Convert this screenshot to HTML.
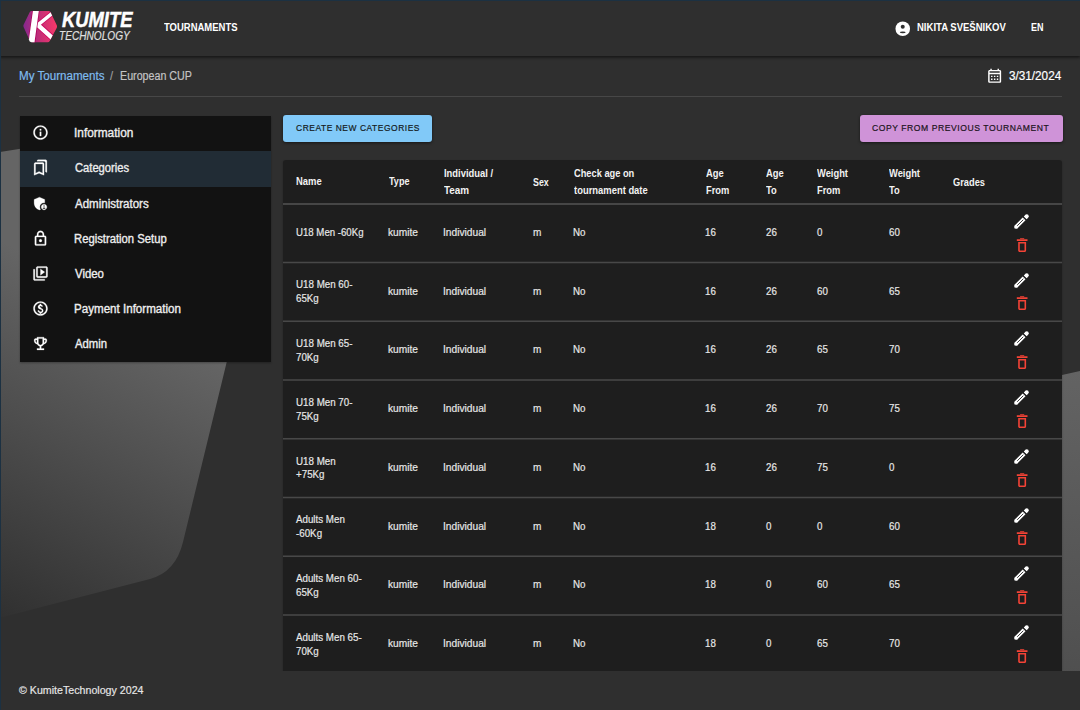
<!DOCTYPE html>
<html><head><meta charset="utf-8"><style>
html,body{margin:0;padding:0;}
body{width:1080px;height:710px;position:relative;overflow:hidden;background:#2f2f2f;font-family:"Liberation Sans",sans-serif;}
.t{position:absolute;line-height:1;white-space:nowrap;transform-origin:0 0;}
.r{-webkit-text-stroke:0.18px currentColor;}
.sb{-webkit-text-stroke:0.35px currentColor;}
.i{position:absolute;display:block;}
.rd{position:absolute;left:283px;width:779px;height:1px;background:#444444;}
</style></head><body>
<svg style="position:absolute;left:0;top:0" width="1080" height="710">
<defs>
<linearGradient id="gl" gradientUnits="userSpaceOnUse" x1="226" y1="362" x2="55" y2="678"><stop offset="0" stop-color="#656565"/><stop offset="1" stop-color="#2c2c2c"/></linearGradient>
<linearGradient id="gr" gradientUnits="userSpaceOnUse" x1="1080" y1="370" x2="1080" y2="680"><stop offset="0" stop-color="#636363"/><stop offset="1" stop-color="#4f4f4f"/></linearGradient>
</defs>
<path fill="url(#gl)" d="M0 152 L200 120.4 Q280 105 268.5 190 L183 542 Q175.6 572.2 150 578.9 L0 617.7 Z"/>
<path fill="url(#gr)" d="M1062 374.9 L1080 371 L1080 680 L1062 680 Z"/>
</svg>
<!-- header -->
<div style="position:absolute;left:0;top:0;width:1080px;height:56px;background:#2f2f2f;box-shadow:0 1px 3px rgba(0,0,0,0.45),0 2px 2px rgba(0,0,0,0.2)"></div>
<div style="position:absolute;left:0;top:0;width:1080px;height:1px;background:#1c3142"></div>
<!-- logo -->
<svg style="position:absolute;left:20px;top:8px" width="40" height="38" viewBox="20 8 40 38">
<defs><linearGradient id="lg" gradientUnits="userSpaceOnUse" x1="23" y1="0" x2="57.5" y2="0"><stop offset="0" stop-color="#85288e"/><stop offset="0.45" stop-color="#c02e78"/><stop offset="1" stop-color="#fb3968"/></linearGradient>
<clipPath id="hc"><path d="M23.6 24.8 Q23.1 25.9 23.6 27 L28.8 38.6 Q30.4 42.3 32.6 42.3 L47.8 42.3 Q49 42.3 49.7 41.1 L56.8 27.8 Q57.4 26.5 56.8 25.2 L50.4 12.1 Q49.7 10.9 48.5 10.9 L31.6 10.9 Q30.4 10.9 29.8 12 Z"/></clipPath></defs>
<path fill="url(#lg)" d="M23.6 24.8 Q23.1 25.9 23.6 27 L28.8 38.6 Q30.4 42.3 32.6 42.3 L47.8 42.3 Q49 42.3 49.7 41.1 L56.8 27.8 Q57.4 26.5 56.8 25.2 L50.4 12.1 Q49.7 10.9 48.5 10.9 L31.6 10.9 Q30.4 10.9 29.8 12 Z"/>
<g clip-path="url(#hc)">
<path d="M37 25.6 L53 12.6" stroke="#c8005a" stroke-width="5"/>
<path d="M37.5 24.6 L53 38.6" stroke="#c8005a" stroke-width="6"/>
<path d="M37 25.6 L53 12.6" stroke="#fff" stroke-width="3.6"/>
<path d="M37.5 24.6 L53 38.6" stroke="#fff" stroke-width="4.6"/>
<path fill="#b0005a" d="M32.2 10 L39.6 10 L35.3 43 L27.9 43 Z"/>
</g>
<path fill="#fff" d="M32.9 10.9 L38.8 10.9 L34.5 42.3 L31.4 42.3 Q29.2 42 28.9 39.6 Z"/>
</svg>
<div style="position:absolute;left:0;top:56px;width:1px;height:654px;background:#1c3142"></div>
<div style="position:absolute;left:0;top:0;width:1px;height:56px;background:#1c3142"></div>
<!-- breadcrumb divider -->
<div style="position:absolute;left:19px;top:96px;width:1043px;height:1px;background:#474747"></div>
<!-- sidebar -->
<div style="position:absolute;left:19.6px;top:115.7px;width:251px;height:246.1px;background:#121212;box-shadow:0 1px 2px rgba(0,0,0,0.3)"></div>
<div style="position:absolute;left:19.6px;top:150.8px;width:251px;height:36px;background:#212c35"></div>
<!-- buttons -->
<div style="position:absolute;left:283px;top:115px;width:149px;height:27px;background:#81c9f8;border-radius:3px;box-shadow:0 1px 3px rgba(0,0,0,0.5)"></div>
<div style="position:absolute;left:860px;top:115.2px;width:202.6px;height:26.8px;background:#cf93d8;border-radius:3px;box-shadow:0 1px 3px rgba(0,0,0,0.5)"></div>
<!-- table -->
<div style="position:absolute;left:283px;top:160px;width:779px;height:511px;background:#1e1e1e;border-radius:3px 3px 0 0;box-shadow:0 1px 2px rgba(0,0,0,0.3)"></div>
<svg style="position:absolute;left:0;top:0" width="1080" height="710"><rect x="283" y="203" width="779" height="2" fill="#464646"/><rect x="283" y="261.70" width="779" height="1.6" fill="#484848"/><rect x="283" y="320.45" width="779" height="1.6" fill="#484848"/><rect x="283" y="379.20" width="779" height="1.6" fill="#484848"/><rect x="283" y="437.95" width="779" height="1.6" fill="#484848"/><rect x="283" y="496.70" width="779" height="1.6" fill="#484848"/><rect x="283" y="555.45" width="779" height="1.6" fill="#484848"/><rect x="283" y="614.20" width="779" height="1.6" fill="#484848"/></svg>
<!-- footer -->
<div style="position:absolute;left:1px;top:671px;width:1079px;height:39px;background:#2f2f2f"></div>
<svg class="i" style="left:31.60px;top:124.30px;width:17px;height:17px;overflow:visible" viewBox="0 0 24 24"><path fill="#fff" fill-rule="evenodd" stroke="#fff" stroke-width="0.35" d="M11 7h2v2h-2zm0 4h2v6h-2zm1-9C6.48 2 2 6.48 2 12s4.48 10 10 10 10-4.48 10-10S17.52 2 12 2zm0 18c-4.41 0-8-3.59-8-8s3.59-8 8-8 8 3.59 8 8-3.59 8-8 8z"/></svg><svg class="i" style="left:31.60px;top:159.40px;width:17px;height:17px;overflow:visible" viewBox="0 0 24 24"><path fill="#fff" fill-rule="evenodd" stroke="#fff" stroke-width="0.35" d="M15 7v12.97l-4.21-1.81-.79-.34-.79.34L5 19.97V7h10m4-6H8.99C7.89 1 7 1.9 7 3h10c1.1 0 2 .9 2 2v13l2 1V3c0-1.1-.9-2-2-2zm-4 4H5c-1.1 0-2 .9-2 2v16l7-3 7 3V7c0-1.1-.9-2-2-2z"/></svg><svg class="i" style="left:31.60px;top:194.50px;width:17px;height:17px;overflow:visible" viewBox="0 0 24 24"><path fill="#fff" fill-rule="evenodd" stroke="#fff" stroke-width="0.35" d="M17 11c.34 0 .67.04 1 .09V6.27L10.5 3 3 6.27v4.91c0 4.54 3.2 8.79 7.5 9.82.55-.13 1.08-.32 1.6-.55-.69-.98-1.1-2.17-1.1-3.45 0-3.31 2.69-6 6-6zm0 2c-2.21 0-4 1.79-4 4s1.79 4 4 4 4-1.79 4-4-1.79-4-4-4zm0 1.38c.62 0 1.12.51 1.12 1.12s-.51 1.12-1.12 1.12-1.12-.51-1.12-1.12.5-1.12 1.12-1.12zm0 5.37c-.93 0-1.74-.46-2.24-1.17.05-.72 1.51-1.08 2.24-1.08s2.19.36 2.24 1.08c-.5.71-1.31 1.17-2.24 1.17z"/></svg><svg class="i" style="left:31.60px;top:229.60px;width:17px;height:17px;overflow:visible" viewBox="0 0 24 24"><path fill="#fff" fill-rule="evenodd" stroke="#fff" stroke-width="0.35" d="M18 8h-1V6c0-2.76-2.24-5-5-5S7 3.24 7 6v2H6c-1.1 0-2 .9-2 2v10c0 1.1.9 2 2 2h12c1.1 0 2-.9 2-2V10c0-1.1-.9-2-2-2zM9 6c0-1.66 1.34-3 3-3s3 1.34 3 3v2H9V6zm9 14H6V10h12v10zm-6-3c1.1 0 2-.9 2-2s-.9-2-2-2-2 .9-2 2 .9 2 2 2z"/></svg><svg class="i" style="left:31.60px;top:264.70px;width:17px;height:17px;overflow:visible" viewBox="0 0 24 24"><path fill="#fff" fill-rule="evenodd" stroke="#fff" stroke-width="0.35" d="M4 6H2v14c0 1.1.9 2 2 2h14v-2H4V6zm16-4H8c-1.1 0-2 .9-2 2v12c0 1.1.9 2 2 2h12c1.1 0 2-.9 2-2V4c0-1.1-.9-2-2-2zm0 14H8V4h12v12zM12 5.5v9l6-4.5z"/></svg><svg class="i" style="left:31.60px;top:299.80px;width:17px;height:17px;overflow:visible" viewBox="0 0 24 24"><path fill="#fff" fill-rule="evenodd" stroke="#fff" stroke-width="0.35" d="M12 2C6.48 2 2 6.48 2 12s4.48 10 10 10 10-4.48 10-10S17.52 2 12 2zm0 18c-4.41 0-8-3.59-8-8s3.59-8 8-8 8 3.59 8 8-3.59 8-8 8zm.88-8.88c-1.34-.44-1.99-.72-1.99-1.43 0-.77.84-1.05 1.37-1.05.99 0 1.35.75 1.43 1.02l1.58-.67c-.15-.44-.82-1.91-2.56-2.23V5.5h-1.75v1.26c-2.48.56-2.49 2.86-2.49 2.96 0 2.27 2.25 2.91 3.35 3.31 1.58.56 2.28 1.07 2.28 2.03 0 1.13-1.05 1.61-1.98 1.61-1.82 0-2.34-1.87-2.4-2.09l-1.66.67c.63 2.19 2.28 2.78 3.02 2.96v1.29h1.75v-1.24c.52-.09 3.02-.59 3.02-3.22.01-1.39-.6-2.61-3.01-3.45z"/></svg><svg class="i" style="left:31.60px;top:334.90px;width:17px;height:17px;overflow:visible" viewBox="0 0 24 24"><path fill="#fff" fill-rule="evenodd" stroke="#fff" stroke-width="0.35" d="M19 5h-2V3H7v2H5c-1.1 0-2 .9-2 2v1c0 2.55 1.92 4.63 4.39 4.94.63 1.5 1.98 2.63 3.61 2.96V19H7v2h10v-2h-4v-3.1c1.63-.33 2.98-1.46 3.61-2.96C19.08 12.63 21 10.55 21 8V7c0-1.1-.9-2-2-2zM5 8V7h2v3.82C5.84 10.4 5 9.3 5 8zm7 6c-1.65 0-3-1.35-3-3V5h6v6c0 1.65-1.35 3-3 3zm7-6c0 1.3-.84 2.4-2 2.82V7h2v1z"/></svg><svg class="i" style="left:894px;top:19.75px;width:17.5px;height:17.5px" viewBox="0 0 24 24"><circle cx="12" cy="12" r="10" fill="#fff"/><circle cx="12" cy="9.4" r="2.75" fill="#2f2f2f"/><ellipse cx="12" cy="16.9" rx="4" ry="1.25" fill="#2f2f2f"/></svg><svg class="i" style="left:985.80px;top:67.40px;width:17.3px;height:17.3px;overflow:visible" viewBox="0 0 24 24"><path fill="#fff" fill-rule="evenodd" d="M19 4h-1V2.6h-2V4H8V2.6H6V4H5c-1.11 0-1.99.9-1.99 2L3 20c0 1.1.89 2 2 2h14c1.1 0 2-.9 2-2V6c0-1.1-.9-2-2-2zm0 16H5V10h14v10zm0-12H5V6h14v2zM9 14H7v-2h2v2zm4 0h-2v-2h2v2zm4 0h-2v-2h2v2zm-8 4H7v-2h2v2zm4 0h-2v-2h2v2zm4 0h-2v-2h2v2z"/></svg><svg class="i" style="left:1012.2px;top:211.85px;width:19px;height:19px;overflow:visible" viewBox="0 0 24 24"><g fill="#fff"><path d="M5.2 18.8L15.3 8.7" stroke="#fff" stroke-width="5"/><circle cx="5.2" cy="18.8" r="2.5"/><path d="M16.7 7.3L18.6 5.4" stroke="#fff" stroke-width="5"/><circle cx="18.6" cy="5.4" r="2.5"/><path d="M6.9 17.1L13.9 10.1" stroke="#1e1e1e" stroke-width="1.1" stroke-linecap="round"/></g></svg><svg class="i" style="left:1013.00px;top:235.65px;width:18.3px;height:18.3px;overflow:visible" viewBox="0 0 24 24"><path fill="#f44336" fill-rule="evenodd" d="M5 4.3h14v2.2H5zM9.3 3h5.4v1.5H9.3zM6.8 7.9h10.4v11.1c0 1.1-.9 2-2 2H8.8c-1.1 0-2-.9-2-2zM8.9 10v9h6.2v-9z"/></svg><svg class="i" style="left:1012.2px;top:270.60px;width:19px;height:19px;overflow:visible" viewBox="0 0 24 24"><g fill="#fff"><path d="M5.2 18.8L15.3 8.7" stroke="#fff" stroke-width="5"/><circle cx="5.2" cy="18.8" r="2.5"/><path d="M16.7 7.3L18.6 5.4" stroke="#fff" stroke-width="5"/><circle cx="18.6" cy="5.4" r="2.5"/><path d="M6.9 17.1L13.9 10.1" stroke="#1e1e1e" stroke-width="1.1" stroke-linecap="round"/></g></svg><svg class="i" style="left:1013.00px;top:294.40px;width:18.3px;height:18.3px;overflow:visible" viewBox="0 0 24 24"><path fill="#f44336" fill-rule="evenodd" d="M5 4.3h14v2.2H5zM9.3 3h5.4v1.5H9.3zM6.8 7.9h10.4v11.1c0 1.1-.9 2-2 2H8.8c-1.1 0-2-.9-2-2zM8.9 10v9h6.2v-9z"/></svg><svg class="i" style="left:1012.2px;top:329.35px;width:19px;height:19px;overflow:visible" viewBox="0 0 24 24"><g fill="#fff"><path d="M5.2 18.8L15.3 8.7" stroke="#fff" stroke-width="5"/><circle cx="5.2" cy="18.8" r="2.5"/><path d="M16.7 7.3L18.6 5.4" stroke="#fff" stroke-width="5"/><circle cx="18.6" cy="5.4" r="2.5"/><path d="M6.9 17.1L13.9 10.1" stroke="#1e1e1e" stroke-width="1.1" stroke-linecap="round"/></g></svg><svg class="i" style="left:1013.00px;top:353.15px;width:18.3px;height:18.3px;overflow:visible" viewBox="0 0 24 24"><path fill="#f44336" fill-rule="evenodd" d="M5 4.3h14v2.2H5zM9.3 3h5.4v1.5H9.3zM6.8 7.9h10.4v11.1c0 1.1-.9 2-2 2H8.8c-1.1 0-2-.9-2-2zM8.9 10v9h6.2v-9z"/></svg><svg class="i" style="left:1012.2px;top:388.10px;width:19px;height:19px;overflow:visible" viewBox="0 0 24 24"><g fill="#fff"><path d="M5.2 18.8L15.3 8.7" stroke="#fff" stroke-width="5"/><circle cx="5.2" cy="18.8" r="2.5"/><path d="M16.7 7.3L18.6 5.4" stroke="#fff" stroke-width="5"/><circle cx="18.6" cy="5.4" r="2.5"/><path d="M6.9 17.1L13.9 10.1" stroke="#1e1e1e" stroke-width="1.1" stroke-linecap="round"/></g></svg><svg class="i" style="left:1013.00px;top:411.90px;width:18.3px;height:18.3px;overflow:visible" viewBox="0 0 24 24"><path fill="#f44336" fill-rule="evenodd" d="M5 4.3h14v2.2H5zM9.3 3h5.4v1.5H9.3zM6.8 7.9h10.4v11.1c0 1.1-.9 2-2 2H8.8c-1.1 0-2-.9-2-2zM8.9 10v9h6.2v-9z"/></svg><svg class="i" style="left:1012.2px;top:446.85px;width:19px;height:19px;overflow:visible" viewBox="0 0 24 24"><g fill="#fff"><path d="M5.2 18.8L15.3 8.7" stroke="#fff" stroke-width="5"/><circle cx="5.2" cy="18.8" r="2.5"/><path d="M16.7 7.3L18.6 5.4" stroke="#fff" stroke-width="5"/><circle cx="18.6" cy="5.4" r="2.5"/><path d="M6.9 17.1L13.9 10.1" stroke="#1e1e1e" stroke-width="1.1" stroke-linecap="round"/></g></svg><svg class="i" style="left:1013.00px;top:470.65px;width:18.3px;height:18.3px;overflow:visible" viewBox="0 0 24 24"><path fill="#f44336" fill-rule="evenodd" d="M5 4.3h14v2.2H5zM9.3 3h5.4v1.5H9.3zM6.8 7.9h10.4v11.1c0 1.1-.9 2-2 2H8.8c-1.1 0-2-.9-2-2zM8.9 10v9h6.2v-9z"/></svg><svg class="i" style="left:1012.2px;top:505.60px;width:19px;height:19px;overflow:visible" viewBox="0 0 24 24"><g fill="#fff"><path d="M5.2 18.8L15.3 8.7" stroke="#fff" stroke-width="5"/><circle cx="5.2" cy="18.8" r="2.5"/><path d="M16.7 7.3L18.6 5.4" stroke="#fff" stroke-width="5"/><circle cx="18.6" cy="5.4" r="2.5"/><path d="M6.9 17.1L13.9 10.1" stroke="#1e1e1e" stroke-width="1.1" stroke-linecap="round"/></g></svg><svg class="i" style="left:1013.00px;top:529.40px;width:18.3px;height:18.3px;overflow:visible" viewBox="0 0 24 24"><path fill="#f44336" fill-rule="evenodd" d="M5 4.3h14v2.2H5zM9.3 3h5.4v1.5H9.3zM6.8 7.9h10.4v11.1c0 1.1-.9 2-2 2H8.8c-1.1 0-2-.9-2-2zM8.9 10v9h6.2v-9z"/></svg><svg class="i" style="left:1012.2px;top:564.35px;width:19px;height:19px;overflow:visible" viewBox="0 0 24 24"><g fill="#fff"><path d="M5.2 18.8L15.3 8.7" stroke="#fff" stroke-width="5"/><circle cx="5.2" cy="18.8" r="2.5"/><path d="M16.7 7.3L18.6 5.4" stroke="#fff" stroke-width="5"/><circle cx="18.6" cy="5.4" r="2.5"/><path d="M6.9 17.1L13.9 10.1" stroke="#1e1e1e" stroke-width="1.1" stroke-linecap="round"/></g></svg><svg class="i" style="left:1013.00px;top:588.15px;width:18.3px;height:18.3px;overflow:visible" viewBox="0 0 24 24"><path fill="#f44336" fill-rule="evenodd" d="M5 4.3h14v2.2H5zM9.3 3h5.4v1.5H9.3zM6.8 7.9h10.4v11.1c0 1.1-.9 2-2 2H8.8c-1.1 0-2-.9-2-2zM8.9 10v9h6.2v-9z"/></svg><svg class="i" style="left:1012.2px;top:623.10px;width:19px;height:19px;overflow:visible" viewBox="0 0 24 24"><g fill="#fff"><path d="M5.2 18.8L15.3 8.7" stroke="#fff" stroke-width="5"/><circle cx="5.2" cy="18.8" r="2.5"/><path d="M16.7 7.3L18.6 5.4" stroke="#fff" stroke-width="5"/><circle cx="18.6" cy="5.4" r="2.5"/><path d="M6.9 17.1L13.9 10.1" stroke="#1e1e1e" stroke-width="1.1" stroke-linecap="round"/></g></svg><svg class="i" style="left:1013.00px;top:646.90px;width:18.3px;height:18.3px;overflow:visible" viewBox="0 0 24 24"><path fill="#f44336" fill-rule="evenodd" d="M5 4.3h14v2.2H5zM9.3 3h5.4v1.5H9.3zM6.8 7.9h10.4v11.1c0 1.1-.9 2-2 2H8.8c-1.1 0-2-.9-2-2zM8.9 10v9h6.2v-9z"/></svg>
<div class="t" style="left:164.00px;top:21.91px;font-size:10.5px;font-weight:700;color:#fff;font-style:normal;transform:scaleX(0.9024);">TOURNAMENTS</div><div class="t" style="left:917.40px;top:22.11px;font-size:10.5px;font-weight:700;color:#fff;font-style:normal;transform:scaleX(0.9061);">NIKITA SVEŠNIKOV</div><div class="t" style="left:1031.00px;top:22.11px;font-size:10.5px;font-weight:700;color:#fff;font-style:normal;transform:scaleX(0.8571);">EN</div><div class="t r" style="left:18.63px;top:70.04px;font-size:12px;font-weight:400;color:#7fbdf0;font-style:normal;transform:scaleX(0.9655);">My Tournaments</div><div class="t r" style="left:110.00px;top:70.04px;font-size:12px;font-weight:400;color:#9e9e9e;font-style:normal;transform:scaleX(0.9300);">/</div><div class="t r" style="left:120.11px;top:70.04px;font-size:12px;font-weight:400;color:#c4c4c4;font-style:normal;transform:scaleX(0.8912);">European CUP</div><div class="t r" style="left:1008.80px;top:69.74px;font-size:12px;font-weight:400;color:#fff;font-style:normal;transform:scaleX(0.9778);">3/31/2024</div><div class="t sb" style="left:74.01px;top:127.14px;font-size:12px;font-weight:400;color:#eeeeee;font-style:normal;transform:scaleX(0.9881);">Information</div><div class="t sb" style="left:75.00px;top:162.34px;font-size:12px;font-weight:400;color:#eeeeee;font-style:normal;transform:scaleX(0.9310);">Categories</div><div class="t sb" style="left:75.00px;top:197.74px;font-size:12px;font-weight:400;color:#eeeeee;font-style:normal;transform:scaleX(0.9610);">Administrators</div><div class="t sb" style="left:74.06px;top:233.04px;font-size:12px;font-weight:400;color:#eeeeee;font-style:normal;transform:scaleX(0.9388);">Registration Setup</div><div class="t sb" style="left:75.00px;top:268.24px;font-size:12px;font-weight:400;color:#eeeeee;font-style:normal;transform:scaleX(0.9500);">Video</div><div class="t sb" style="left:74.03px;top:302.94px;font-size:12px;font-weight:400;color:#eeeeee;font-style:normal;transform:scaleX(0.9661);">Payment Information</div><div class="t sb" style="left:75.00px;top:337.84px;font-size:12px;font-weight:400;color:#eeeeee;font-style:normal;transform:scaleX(0.9412);">Admin</div><div class="t r" style="left:295.70px;top:123.44px;font-size:9.4px;font-weight:400;color:#141a20;font-style:normal;transform:scaleX(0.9000);-webkit-text-stroke:0.2px #141a20;letter-spacing:0.6px;">CREATE NEW CATEGORIES</div><div class="t r" style="left:872.40px;top:123.44px;font-size:9.4px;font-weight:400;color:#1c1420;font-style:normal;transform:scaleX(0.9161);-webkit-text-stroke:0.2px #1c1420;letter-spacing:0.6px;">COPY FROM PREVIOUS TOURNAMENT</div><div class="t" style="left:295.70px;top:176.11px;font-size:10.5px;font-weight:700;color:#f2f2f2;font-style:normal;transform:scaleX(0.8966);">Name</div><div class="t" style="left:388.90px;top:176.11px;font-size:10.5px;font-weight:700;color:#f2f2f2;font-style:normal;transform:scaleX(0.8625);">Type</div><div class="t" style="left:443.75px;top:168.11px;font-size:10.5px;font-weight:700;color:#f2f2f2;font-style:normal;transform:scaleX(0.8945);">Individual /</div><div class="t" style="left:443.50px;top:185.11px;font-size:10.5px;font-weight:700;color:#f2f2f2;font-style:normal;transform:scaleX(0.9423);">Team</div><div class="t" style="left:533.00px;top:176.91px;font-size:10.5px;font-weight:700;color:#f2f2f2;font-style:normal;transform:scaleX(0.8421);">Sex</div><div class="t" style="left:574.00px;top:168.11px;font-size:10.5px;font-weight:700;color:#f2f2f2;font-style:normal;transform:scaleX(0.8824);">Check age on</div><div class="t" style="left:574.00px;top:185.11px;font-size:10.5px;font-weight:700;color:#f2f2f2;font-style:normal;transform:scaleX(0.8963);">tournament date</div><div class="t" style="left:705.80px;top:168.11px;font-size:10.5px;font-weight:700;color:#f2f2f2;font-style:normal;transform:scaleX(0.8900);">Age</div><div class="t" style="left:705.80px;top:185.11px;font-size:10.5px;font-weight:700;color:#f2f2f2;font-style:normal;transform:scaleX(0.8900);">From</div><div class="t" style="left:766.40px;top:168.11px;font-size:10.5px;font-weight:700;color:#f2f2f2;font-style:normal;transform:scaleX(0.8900);">Age</div><div class="t" style="left:766.40px;top:185.11px;font-size:10.5px;font-weight:700;color:#f2f2f2;font-style:normal;transform:scaleX(0.8900);">To</div><div class="t" style="left:817.00px;top:168.11px;font-size:10.5px;font-weight:700;color:#f2f2f2;font-style:normal;transform:scaleX(0.8900);">Weight</div><div class="t" style="left:817.00px;top:185.11px;font-size:10.5px;font-weight:700;color:#f2f2f2;font-style:normal;transform:scaleX(0.8900);">From</div><div class="t" style="left:889.20px;top:168.11px;font-size:10.5px;font-weight:700;color:#f2f2f2;font-style:normal;transform:scaleX(0.8900);">Weight</div><div class="t" style="left:889.20px;top:185.11px;font-size:10.5px;font-weight:700;color:#f2f2f2;font-style:normal;transform:scaleX(0.8900);">To</div><div class="t" style="left:953.20px;top:176.91px;font-size:10.5px;font-weight:700;color:#f2f2f2;font-style:normal;transform:scaleX(0.8833);">Grades</div><div class="t r" style="left:295.70px;top:226.99px;font-size:10.5px;font-weight:400;color:#e8e8e8;font-style:normal;transform:scaleX(0.9178);">U18 Men -60Kg</div><div class="t r" style="left:388.00px;top:226.99px;font-size:10.5px;font-weight:400;color:#e8e8e8;font-style:normal;transform:scaleX(0.9677);">kumite</div><div class="t r" style="left:442.73px;top:226.99px;font-size:10.5px;font-weight:400;color:#e8e8e8;font-style:normal;transform:scaleX(0.9721);">Individual</div><div class="t r" style="left:533.20px;top:226.99px;font-size:10.5px;font-weight:400;color:#e8e8e8;font-style:normal;transform:scaleX(0.9556);">m</div><div class="t r" style="left:572.87px;top:226.99px;font-size:10.5px;font-weight:400;color:#e8e8e8;font-style:normal;transform:scaleX(0.9300);">No</div><div class="t r" style="left:705.27px;top:226.99px;font-size:10.5px;font-weight:400;color:#e8e8e8;font-style:normal;transform:scaleX(0.9300);">16</div><div class="t r" style="left:766.20px;top:226.99px;font-size:10.5px;font-weight:400;color:#e8e8e8;font-style:normal;transform:scaleX(0.9300);">26</div><div class="t r" style="left:816.70px;top:226.99px;font-size:10.5px;font-weight:400;color:#e8e8e8;font-style:normal;transform:scaleX(0.9300);">0</div><div class="t r" style="left:889.30px;top:226.99px;font-size:10.5px;font-weight:400;color:#e8e8e8;font-style:normal;transform:scaleX(0.9300);">60</div><div class="t r" style="left:295.70px;top:279.44px;font-size:10.5px;font-weight:400;color:#e8e8e8;font-style:normal;transform:scaleX(0.9300);">U18 Men 60-</div><div class="t r" style="left:295.70px;top:293.04px;font-size:10.5px;font-weight:400;color:#e8e8e8;font-style:normal;transform:scaleX(0.9300);">65Kg</div><div class="t r" style="left:388.00px;top:285.74px;font-size:10.5px;font-weight:400;color:#e8e8e8;font-style:normal;transform:scaleX(0.9677);">kumite</div><div class="t r" style="left:442.73px;top:285.74px;font-size:10.5px;font-weight:400;color:#e8e8e8;font-style:normal;transform:scaleX(0.9721);">Individual</div><div class="t r" style="left:533.20px;top:285.74px;font-size:10.5px;font-weight:400;color:#e8e8e8;font-style:normal;transform:scaleX(0.9556);">m</div><div class="t r" style="left:572.87px;top:285.74px;font-size:10.5px;font-weight:400;color:#e8e8e8;font-style:normal;transform:scaleX(0.9300);">No</div><div class="t r" style="left:705.27px;top:285.74px;font-size:10.5px;font-weight:400;color:#e8e8e8;font-style:normal;transform:scaleX(0.9300);">16</div><div class="t r" style="left:766.20px;top:285.74px;font-size:10.5px;font-weight:400;color:#e8e8e8;font-style:normal;transform:scaleX(0.9300);">26</div><div class="t r" style="left:816.70px;top:285.74px;font-size:10.5px;font-weight:400;color:#e8e8e8;font-style:normal;transform:scaleX(0.9300);">60</div><div class="t r" style="left:889.30px;top:285.74px;font-size:10.5px;font-weight:400;color:#e8e8e8;font-style:normal;transform:scaleX(0.9300);">65</div><div class="t r" style="left:295.70px;top:338.19px;font-size:10.5px;font-weight:400;color:#e8e8e8;font-style:normal;transform:scaleX(0.9300);">U18 Men 65-</div><div class="t r" style="left:295.70px;top:351.79px;font-size:10.5px;font-weight:400;color:#e8e8e8;font-style:normal;transform:scaleX(0.9300);">70Kg</div><div class="t r" style="left:388.00px;top:344.49px;font-size:10.5px;font-weight:400;color:#e8e8e8;font-style:normal;transform:scaleX(0.9677);">kumite</div><div class="t r" style="left:442.73px;top:344.49px;font-size:10.5px;font-weight:400;color:#e8e8e8;font-style:normal;transform:scaleX(0.9721);">Individual</div><div class="t r" style="left:533.20px;top:344.49px;font-size:10.5px;font-weight:400;color:#e8e8e8;font-style:normal;transform:scaleX(0.9556);">m</div><div class="t r" style="left:572.87px;top:344.49px;font-size:10.5px;font-weight:400;color:#e8e8e8;font-style:normal;transform:scaleX(0.9300);">No</div><div class="t r" style="left:705.27px;top:344.49px;font-size:10.5px;font-weight:400;color:#e8e8e8;font-style:normal;transform:scaleX(0.9300);">16</div><div class="t r" style="left:766.20px;top:344.49px;font-size:10.5px;font-weight:400;color:#e8e8e8;font-style:normal;transform:scaleX(0.9300);">26</div><div class="t r" style="left:816.70px;top:344.49px;font-size:10.5px;font-weight:400;color:#e8e8e8;font-style:normal;transform:scaleX(0.9300);">65</div><div class="t r" style="left:889.30px;top:344.49px;font-size:10.5px;font-weight:400;color:#e8e8e8;font-style:normal;transform:scaleX(0.9300);">70</div><div class="t r" style="left:295.70px;top:396.94px;font-size:10.5px;font-weight:400;color:#e8e8e8;font-style:normal;transform:scaleX(0.9300);">U18 Men 70-</div><div class="t r" style="left:295.70px;top:410.54px;font-size:10.5px;font-weight:400;color:#e8e8e8;font-style:normal;transform:scaleX(0.9300);">75Kg</div><div class="t r" style="left:388.00px;top:403.24px;font-size:10.5px;font-weight:400;color:#e8e8e8;font-style:normal;transform:scaleX(0.9677);">kumite</div><div class="t r" style="left:442.73px;top:403.24px;font-size:10.5px;font-weight:400;color:#e8e8e8;font-style:normal;transform:scaleX(0.9721);">Individual</div><div class="t r" style="left:533.20px;top:403.24px;font-size:10.5px;font-weight:400;color:#e8e8e8;font-style:normal;transform:scaleX(0.9556);">m</div><div class="t r" style="left:572.87px;top:403.24px;font-size:10.5px;font-weight:400;color:#e8e8e8;font-style:normal;transform:scaleX(0.9300);">No</div><div class="t r" style="left:705.27px;top:403.24px;font-size:10.5px;font-weight:400;color:#e8e8e8;font-style:normal;transform:scaleX(0.9300);">16</div><div class="t r" style="left:766.20px;top:403.24px;font-size:10.5px;font-weight:400;color:#e8e8e8;font-style:normal;transform:scaleX(0.9300);">26</div><div class="t r" style="left:816.70px;top:403.24px;font-size:10.5px;font-weight:400;color:#e8e8e8;font-style:normal;transform:scaleX(0.9300);">70</div><div class="t r" style="left:889.30px;top:403.24px;font-size:10.5px;font-weight:400;color:#e8e8e8;font-style:normal;transform:scaleX(0.9300);">75</div><div class="t r" style="left:295.70px;top:455.69px;font-size:10.5px;font-weight:400;color:#e8e8e8;font-style:normal;transform:scaleX(0.9300);">U18 Men</div><div class="t r" style="left:295.70px;top:469.29px;font-size:10.5px;font-weight:400;color:#e8e8e8;font-style:normal;transform:scaleX(0.9300);">+75Kg</div><div class="t r" style="left:388.00px;top:461.99px;font-size:10.5px;font-weight:400;color:#e8e8e8;font-style:normal;transform:scaleX(0.9677);">kumite</div><div class="t r" style="left:442.73px;top:461.99px;font-size:10.5px;font-weight:400;color:#e8e8e8;font-style:normal;transform:scaleX(0.9721);">Individual</div><div class="t r" style="left:533.20px;top:461.99px;font-size:10.5px;font-weight:400;color:#e8e8e8;font-style:normal;transform:scaleX(0.9556);">m</div><div class="t r" style="left:572.87px;top:461.99px;font-size:10.5px;font-weight:400;color:#e8e8e8;font-style:normal;transform:scaleX(0.9300);">No</div><div class="t r" style="left:705.27px;top:461.99px;font-size:10.5px;font-weight:400;color:#e8e8e8;font-style:normal;transform:scaleX(0.9300);">16</div><div class="t r" style="left:766.20px;top:461.99px;font-size:10.5px;font-weight:400;color:#e8e8e8;font-style:normal;transform:scaleX(0.9300);">26</div><div class="t r" style="left:816.70px;top:461.99px;font-size:10.5px;font-weight:400;color:#e8e8e8;font-style:normal;transform:scaleX(0.9300);">75</div><div class="t r" style="left:889.30px;top:461.99px;font-size:10.5px;font-weight:400;color:#e8e8e8;font-style:normal;transform:scaleX(0.9300);">0</div><div class="t r" style="left:295.70px;top:514.44px;font-size:10.5px;font-weight:400;color:#e8e8e8;font-style:normal;transform:scaleX(0.9300);">Adults Men</div><div class="t r" style="left:295.70px;top:528.04px;font-size:10.5px;font-weight:400;color:#e8e8e8;font-style:normal;transform:scaleX(0.9300);">-60Kg</div><div class="t r" style="left:388.00px;top:520.74px;font-size:10.5px;font-weight:400;color:#e8e8e8;font-style:normal;transform:scaleX(0.9677);">kumite</div><div class="t r" style="left:442.73px;top:520.74px;font-size:10.5px;font-weight:400;color:#e8e8e8;font-style:normal;transform:scaleX(0.9721);">Individual</div><div class="t r" style="left:533.20px;top:520.74px;font-size:10.5px;font-weight:400;color:#e8e8e8;font-style:normal;transform:scaleX(0.9556);">m</div><div class="t r" style="left:572.87px;top:520.74px;font-size:10.5px;font-weight:400;color:#e8e8e8;font-style:normal;transform:scaleX(0.9300);">No</div><div class="t r" style="left:705.27px;top:520.74px;font-size:10.5px;font-weight:400;color:#e8e8e8;font-style:normal;transform:scaleX(0.9300);">18</div><div class="t r" style="left:766.20px;top:520.74px;font-size:10.5px;font-weight:400;color:#e8e8e8;font-style:normal;transform:scaleX(0.9300);">0</div><div class="t r" style="left:816.70px;top:520.74px;font-size:10.5px;font-weight:400;color:#e8e8e8;font-style:normal;transform:scaleX(0.9300);">0</div><div class="t r" style="left:889.30px;top:520.74px;font-size:10.5px;font-weight:400;color:#e8e8e8;font-style:normal;transform:scaleX(0.9300);">60</div><div class="t r" style="left:295.70px;top:573.19px;font-size:10.5px;font-weight:400;color:#e8e8e8;font-style:normal;transform:scaleX(0.9300);">Adults Men 60-</div><div class="t r" style="left:295.70px;top:586.79px;font-size:10.5px;font-weight:400;color:#e8e8e8;font-style:normal;transform:scaleX(0.9300);">65Kg</div><div class="t r" style="left:388.00px;top:579.49px;font-size:10.5px;font-weight:400;color:#e8e8e8;font-style:normal;transform:scaleX(0.9677);">kumite</div><div class="t r" style="left:442.73px;top:579.49px;font-size:10.5px;font-weight:400;color:#e8e8e8;font-style:normal;transform:scaleX(0.9721);">Individual</div><div class="t r" style="left:533.20px;top:579.49px;font-size:10.5px;font-weight:400;color:#e8e8e8;font-style:normal;transform:scaleX(0.9556);">m</div><div class="t r" style="left:572.87px;top:579.49px;font-size:10.5px;font-weight:400;color:#e8e8e8;font-style:normal;transform:scaleX(0.9300);">No</div><div class="t r" style="left:705.27px;top:579.49px;font-size:10.5px;font-weight:400;color:#e8e8e8;font-style:normal;transform:scaleX(0.9300);">18</div><div class="t r" style="left:766.20px;top:579.49px;font-size:10.5px;font-weight:400;color:#e8e8e8;font-style:normal;transform:scaleX(0.9300);">0</div><div class="t r" style="left:816.70px;top:579.49px;font-size:10.5px;font-weight:400;color:#e8e8e8;font-style:normal;transform:scaleX(0.9300);">60</div><div class="t r" style="left:889.30px;top:579.49px;font-size:10.5px;font-weight:400;color:#e8e8e8;font-style:normal;transform:scaleX(0.9300);">65</div><div class="t r" style="left:295.70px;top:631.94px;font-size:10.5px;font-weight:400;color:#e8e8e8;font-style:normal;transform:scaleX(0.9300);">Adults Men 65-</div><div class="t r" style="left:295.70px;top:645.54px;font-size:10.5px;font-weight:400;color:#e8e8e8;font-style:normal;transform:scaleX(0.9300);">70Kg</div><div class="t r" style="left:388.00px;top:638.24px;font-size:10.5px;font-weight:400;color:#e8e8e8;font-style:normal;transform:scaleX(0.9677);">kumite</div><div class="t r" style="left:442.73px;top:638.24px;font-size:10.5px;font-weight:400;color:#e8e8e8;font-style:normal;transform:scaleX(0.9721);">Individual</div><div class="t r" style="left:533.20px;top:638.24px;font-size:10.5px;font-weight:400;color:#e8e8e8;font-style:normal;transform:scaleX(0.9556);">m</div><div class="t r" style="left:572.87px;top:638.24px;font-size:10.5px;font-weight:400;color:#e8e8e8;font-style:normal;transform:scaleX(0.9300);">No</div><div class="t r" style="left:705.27px;top:638.24px;font-size:10.5px;font-weight:400;color:#e8e8e8;font-style:normal;transform:scaleX(0.9300);">18</div><div class="t r" style="left:766.20px;top:638.24px;font-size:10.5px;font-weight:400;color:#e8e8e8;font-style:normal;transform:scaleX(0.9300);">0</div><div class="t r" style="left:816.70px;top:638.24px;font-size:10.5px;font-weight:400;color:#e8e8e8;font-style:normal;transform:scaleX(0.9300);">65</div><div class="t r" style="left:889.30px;top:638.24px;font-size:10.5px;font-weight:400;color:#e8e8e8;font-style:normal;transform:scaleX(0.9300);">70</div><div class="t" style="left:62.30px;top:9.32px;font-size:21.6px;font-weight:700;color:#fff;font-style:italic;transform:scaleX(0.8512);-webkit-text-stroke:0.5px #fff;">KUMITE</div><div class="t r" style="left:58.88px;top:30.10px;font-size:12.4px;font-weight:400;color:#e0e0e0;font-style:italic;transform:scaleX(0.8161);">TECHNOLOGY</div><div class="t r" style="left:19.40px;top:685.18px;font-size:11.25px;font-weight:400;color:#e6e6e6;font-style:normal;transform:scaleX(0.9470);">© KumiteTechnology 2024</div>
</body></html>
